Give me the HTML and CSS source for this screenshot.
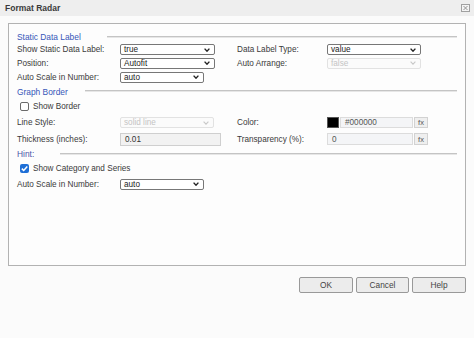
FILE: index.html
```html
<!DOCTYPE html>
<html>
<head>
<meta charset="utf-8">
<link rel="stylesheet" href="styles.css">
</head>
<body>
<div class="titlebar">
  <span class="title">Format Radar</span>
  <svg class="close" width="9" height="8" viewBox="0 0 9 8"><rect x="0.5" y="0.5" width="8" height="7" fill="#f4f4f4" stroke="#a0a0a0"/><path d="M2.5 2 L6.5 6 M6.5 2 L2.5 6" stroke="#888" stroke-width="0.9"/></svg>
</div>
<div class="panel">
  <div class="heading h12"><span>Static Data Label</span><span class="rule gap-26"></span></div>
  <div class="row h13">
    <label>Show Static Data Label:</label>
    <div class="sel w95"><span>true</span><svg class="chev" width="6" height="4" viewBox="0 0 6 4"><path d="M0.6 0.6 L3 3.2 L5.4 0.6" fill="none" stroke="#222" stroke-width="1.4"/></svg></div>
    <label>Data Label Type:</label>
    <div class="sel w94"><span>value</span><svg class="chev" width="6" height="4" viewBox="0 0 6 4"><path d="M0.6 0.6 L3 3.2 L5.4 0.6" fill="none" stroke="#222" stroke-width="1.4"/></svg></div>
  </div>
  <div class="row h14">
    <label>Position:</label>
    <div class="sel w95"><span>Autofit</span><svg class="chev" width="6" height="4" viewBox="0 0 6 4"><path d="M0.6 0.6 L3 3.2 L5.4 0.6" fill="none" stroke="#222" stroke-width="1.4"/></svg></div>
    <label>Auto Arrange:</label>
    <div class="sel w94 disabled"><span>false</span><svg class="chev" width="6" height="4" viewBox="0 0 6 4"><path d="M0.6 0.6 L3 3.2 L5.4 0.6" fill="none" stroke="#c8c8c8" stroke-width="1.1"/></svg></div>
  </div>
  <div class="row h14">
    <label>Auto Scale in Number:</label>
    <div class="sel w84"><span>auto</span><svg class="chev" width="6" height="4" viewBox="0 0 6 4"><path d="M0.6 0.6 L3 3.2 L5.4 0.6" fill="none" stroke="#222" stroke-width="1.4"/></svg></div>
  </div>
  <div class="heading h15"><span>Graph Border</span><span class="rule gap-17"></span></div>
  <div class="checkrow h15"><span class="cb"></span><span>Show Border</span></div>
  <div class="row h17">
    <label>Line Style:</label>
    <div class="sel w94 disabled"><span>solid line</span><svg class="chev" width="6" height="4" viewBox="0 0 6 4"><path d="M0.6 0.6 L3 3.2 L5.4 0.6" fill="none" stroke="#c8c8c8" stroke-width="1.1"/></svg></div>
    <label>Color:</label>
    <div class="combo"><span class="swatch"></span><span class="txt w73">#000000</span><span class="fx">fx</span></div>
  </div>
  <div class="row h16">
    <label>Thickness (inches):</label>
    <div class="inp w101">0.01</div>
    <label>Transparency (%):</label>
    <div class="combo"><span class="txt w86 tall">0</span><span class="fx tall">fx</span></div>
  </div>
  <div class="heading h14 hint"><span>Hint:</span><span class="rule gap-26"></span></div>
  <div class="checkrow h15"><span class="cb checked"><svg width="9" height="9" viewBox="0 0 9 9"><path d="M1.8 4.6 L3.7 6.5 L7.3 2.4" fill="none" stroke="#fff" stroke-width="1.5"/></svg></span><span>Show Category and Series</span></div>
  <div class="row h16">
    <label>Auto Scale in Number:</label>
    <div class="sel w84"><span>auto</span><svg class="chev" width="6" height="4" viewBox="0 0 6 4"><path d="M0.6 0.6 L3 3.2 L5.4 0.6" fill="none" stroke="#222" stroke-width="1.4"/></svg></div>
  </div>
</div>
<div class="buttons">
  <button class="btn b54">OK</button>
  <button class="btn b53">Cancel</button>
  <button class="btn b54">Help</button>
</div>
</body>
</html>
```
FILE: styles.css
```css
html, body {
  margin: 0;
  padding: 0;
}
body {
  width: 474px;
  height: 338px;
  background: #fbfbfb;
  font-family: "Liberation Sans", Arial, sans-serif;
  font-size: 8.2px;
  color: #333;
  overflow: hidden;
}
.titlebar {
  height: 16px;
  background: #eeeeee;
  display: flex;
  align-items: center;
  justify-content: space-between;
  padding: 0 4px 0 5px;
}
.title {
  font-weight: bold;
  font-size: 8.5px;
  color: #3a3a3a;
}
.close {
  display: block;
  margin-top: -1px;
}
.panel {
  box-sizing: border-box;
  margin: 7px 8px 0 8px;
  height: 243px;
  border: 1px solid #b2b2b2;
  background: #fdfdfd;
  padding: 7px 8px 0 8px;
}
.h12 { height: 12px; }
.h13 { height: 13px; }
.h14 { height: 14px; }
.h15 { height: 15px; }
.h16 { height: 16px; }
.h17 { height: 17px; }
.heading {
  display: flex;
  align-items: center;
  color: #3656b8;
  font-size: 8.4px;
}
.heading.hint { color: #4a55a8; }
.rule {
  flex: 1;
  height: 0;
  border-top: 1px solid #c4c4c4;
  border-bottom: 1px solid #e6e6e6;
  margin-top: -1px;
}
.gap-26 { margin-left: 26px; }
.gap-17 { margin-left: 17px; }
.row {
  display: grid;
  grid-template-columns: 103px 117px 90px 1fr;
  align-items: center;
}
.row label {
  color: #3a3a3a;
}
.sel {
  box-sizing: border-box;
  height: 11px;
  border: 1px solid #777;
  border-radius: 2px;
  background: #fff;
  display: flex;
  align-items: center;
  justify-content: space-between;
  padding: 0 4px 0 3px;
  color: #222;
}
.sel.disabled {
  border-color: #e2e2e2;
  color: #c4c4c4;
  background: #fbfbfb;
}
.chev { display: block; }
.w95 { width: 95px; }
.w94 { width: 94px; }
.w84 { width: 84px; }
.w101 { width: 101px; }
.w73 { width: 73px; }
.w86 { width: 86px; }
.checkrow {
  display: flex;
  align-items: center;
  padding-left: 3px;
  color: #3a3a3a;
}
.cb {
  box-sizing: border-box;
  width: 9px;
  height: 9px;
  border: 1px solid #6a6a6a;
  border-radius: 2px;
  background: #fff;
  margin-right: 4px;
  display: flex;
  align-items: center;
  justify-content: center;
}
.cb.checked {
  border: none;
  background: #1f6fd6;
}
.cb svg { display: block; }
.inp {
  box-sizing: border-box;
  height: 13px;
  border: 1px solid #cfcfcf;
  background: #f2f2f2;
  display: flex;
  align-items: center;
  padding-left: 4px;
  color: #333;
}
.combo {
  display: flex;
  align-items: center;
}
.swatch {
  box-sizing: border-box;
  width: 12px;
  height: 11px;
  background: #000;
  border: 1px solid #555;
  margin-right: 1px;
}
.txt {
  box-sizing: border-box;
  height: 11px;
  border: 1px solid #dcdcdc;
  background: #f4f5f7;
  display: flex;
  align-items: center;
  padding-left: 4px;
  color: #555;
}
.txt.tall { height: 12px; }
.fx {
  box-sizing: border-box;
  width: 14px;
  height: 11px;
  margin-left: 1px;
  border: 1px solid #d2d2d2;
  background: #efefef;
  color: #555;
  display: flex;
  align-items: center;
  justify-content: center;
  font-size: 7.5px;
}
.fx.tall { height: 12px; }
.buttons {
  display: flex;
  justify-content: flex-end;
  gap: 3px;
  margin: 11px 8px 0 0;
}
.btn {
  box-sizing: border-box;
  height: 16px;
  border: 1px solid #999;
  border-radius: 2px;
  background: #ececec;
  font-family: "Liberation Sans", Arial, sans-serif;
  font-size: 8.3px;
  color: #444;
  padding: 0;
}
.b54 { width: 54px; }
.b53 { width: 53px; }
```
